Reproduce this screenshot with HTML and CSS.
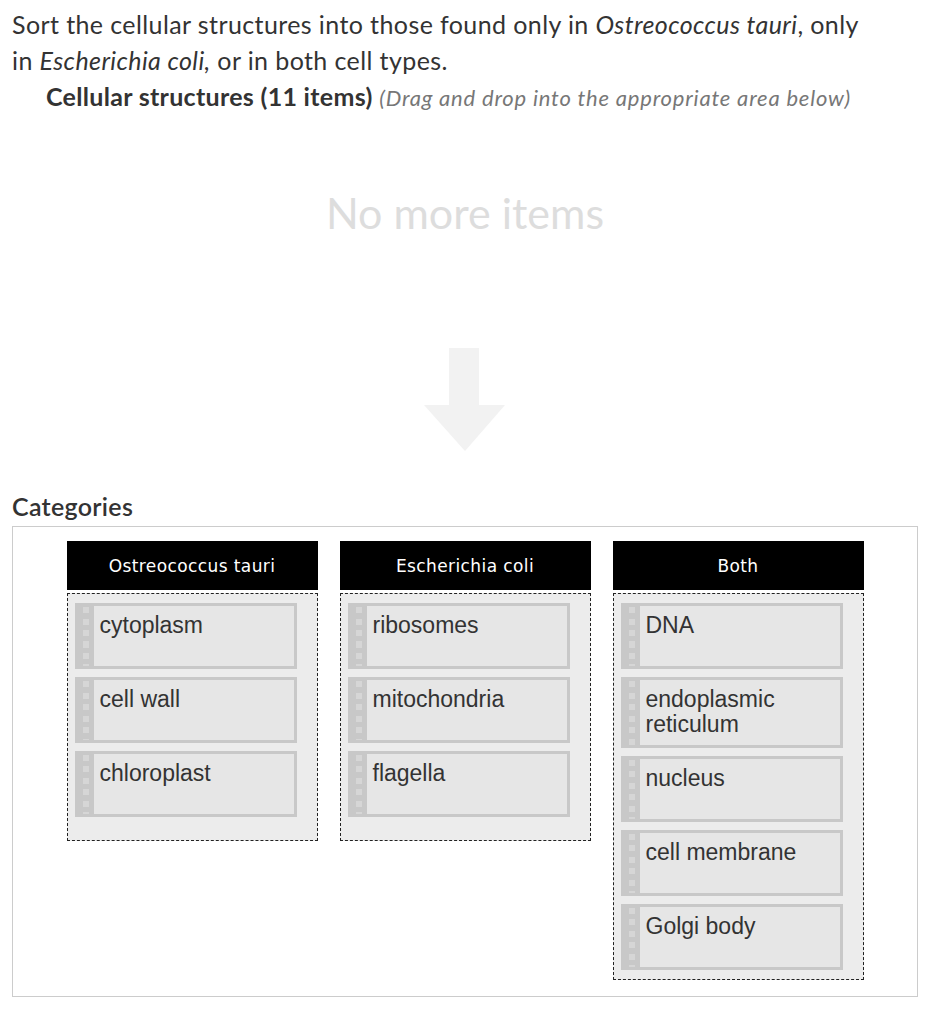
FILE: index.html
```html
<!DOCTYPE html>
<html>
<head>
<meta charset="utf-8">
<link rel="stylesheet" href="styles.css">
</head>
<body>
<div class="page">
  <p class="prompt">Sort the cellular structures into those found only in <em>Ostreococcus tauri</em>, only in <em>Escherichia coli,</em> or in both cell types.</p>
  <div class="source-head"><strong>Cellular structures (11 items)</strong> <span class="hint">(Drag and drop into the appropriate area below)</span></div>
  <div class="source">
    <div class="empty">No more items</div>
    <svg class="arrow" width="82" height="104" viewBox="0 0 82 104"><path d="M25 0 H55 V57 H81 L41 103 L0 57 H25 Z" fill="#f2f2f2"/></svg>
  </div>
  <h2 class="cat-title">Categories</h2>
  <div class="categories">
    <div class="col">
      <div class="col-head">Ostreococcus tauri</div>
      <div class="zone">
        <div class="item"><span class="grip"></span><span class="label">cytoplasm</span></div>
        <div class="item"><span class="grip"></span><span class="label">cell wall</span></div>
        <div class="item"><span class="grip"></span><span class="label">chloroplast</span></div>
      </div>
    </div>
    <div class="col">
      <div class="col-head">Escherichia coli</div>
      <div class="zone">
        <div class="item"><span class="grip"></span><span class="label">ribosomes</span></div>
        <div class="item"><span class="grip"></span><span class="label">mitochondria</span></div>
        <div class="item"><span class="grip"></span><span class="label">flagella</span></div>
      </div>
    </div>
    <div class="col">
      <div class="col-head">Both</div>
      <div class="zone">
        <div class="item"><span class="grip"></span><span class="label">DNA</span></div>
        <div class="item"><span class="grip"></span><span class="label">endoplasmic reticulum</span></div>
        <div class="item"><span class="grip"></span><span class="label">nucleus</span></div>
        <div class="item"><span class="grip"></span><span class="label">cell membrane</span></div>
        <div class="item"><span class="grip"></span><span class="label">Golgi body</span></div>
      </div>
    </div>
  </div>
</div>
</body>
</html>
```
FILE: styles.css
```css
html, body { margin: 0; padding: 0; background: #fff; }
body { font-family: Lato, "Open Sans", sans-serif; color: #333; }
.page { padding: 0 12px; width: 906px; }
.prompt { margin: 0; padding-top: 6px; font-size: 25px; line-height: 36px; letter-spacing: 0.4px; width: 870px; }
.prompt em { font-style: italic; }
.source-head { margin: 0; padding-left: 34px; font-size: 25px; line-height: 36px; letter-spacing: 0.3px; }
.source-head strong { font-weight: 700; }
.hint { font-style: italic; color: #777; font-size: 22px; letter-spacing: 0.8px; }
.source { display: flex; flex-direction: column; align-items: center; padding-top: 72px; height: 370px; box-sizing: border-box; }
.empty { font-size: 43px; font-weight: 400; color: #ddd; line-height: 50px; }
.arrow { margin-top: 110px; display: block; }
.cat-title { margin: 0; font-size: 25px; font-weight: 600; letter-spacing: 0.3px; line-height: 40px; color: #333; }
.categories { border: 1px solid #ccc; display: flex; justify-content: center; gap: 22px; padding: 14px 0 16px; align-items: flex-start; }
.col { width: 251px; }
.col-head { background: #000; color: #fff; height: 49px; display: flex; align-items: center; justify-content: center; font-family: "DejaVu Sans", sans-serif; font-size: 17px; letter-spacing: 0.4px; padding-top: 1px; box-sizing: border-box; }
.zone { margin-top: 3px; border: 1px dashed #222; background: #ececec; padding: 9px 7px; min-height: 228px; display: flex; flex-direction: column; gap: 8px; }
.item { width: 222px; box-sizing: border-box; min-height: 66px; border: 3px solid #c8c8c8; background: #e6e6e6; display: flex; }
.grip { width: 16px; flex: none; background: #c8c8c8 repeating-linear-gradient(to bottom, #d6d6d6 0 6px, transparent 6px 11.5px) 5px 1px / 6px 100% no-repeat; }
.label { font-family: "Liberation Sans", Arial, sans-serif; font-size: 23px; line-height: 25px; color: #333; padding: 7px 8px 8px 6px; }
```
